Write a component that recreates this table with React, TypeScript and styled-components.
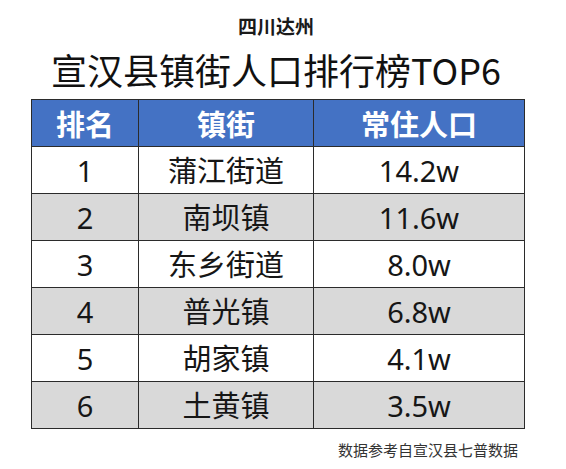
import React from "react";
import styled, { createGlobalStyle } from "styled-components";

const GlobalStyle = createGlobalStyle`
    body {
        margin: 0;
        background: #ffffff;
        font-family: "Noto Sans", "Noto Sans CJK SC", sans-serif;
    }
`;

const Page = styled.div`
    display: flex;
    flex-direction: column;
    width: 490px;
    padding: 16px 0 0 31px;
`;

const Region = styled.div`
    text-align: center;
    font-family: "Noto Sans CJK SC", sans-serif;
    font-weight: 700;
    font-size: 19px;
    line-height: 19px;
    color: #1a1a1a;
`;

const Title = styled.h1`
    margin: 13px 0 0 0;
    text-align: center;
    font-family: "Noto Sans CJK SC", sans-serif;
    font-weight: 400;
    font-size: 36px;
    line-height: 42px;
    color: #111111;
`;

const Table = styled.table`
    margin-top: 9px;
    width: 490px;
    border-collapse: collapse;
    table-layout: fixed;
`;

const HeadCell = styled.th<{ width: number }>`
    width: ${props => props.width}px;
    height: 46px;
    padding: 0;
    border: 1px solid #2b2b2b;
    background-color: #4472c4;

    font-family: "Noto Sans CJK SC", sans-serif;
    font-weight: 700;
    font-size: 29px;
    color: #ffffff;
    text-align: center;
`;

const Row = styled.tr<{ shaded: boolean }>`
    background-color: ${props => props.shaded ? "#d9d9d9" : "#ffffff"};
`;

const Cell = styled.td`
    height: 46px;
    padding: 0;
    border: 1px solid #2b2b2b;

    font-family: "Noto Sans", "Noto Sans CJK SC", sans-serif;
    font-weight: 400;
    font-size: 29px;
    line-height: 1;
    color: #161616;
    text-align: center;
`;

const Source = styled.div`
    margin-top: 13px;
    padding-right: 3px;
    text-align: right;
    font-family: "Noto Sans CJK SC", sans-serif;
    font-size: 15px;
    line-height: 16px;
    color: #333333;
`;

const rows = [
    { rank: 1, name: "蒲江街道", people: "14.2w" },
    { rank: 2, name: "南坝镇", people: "11.6w" },
    { rank: 3, name: "东乡街道", people: "8.0w" },
    { rank: 4, name: "普光镇", people: "6.8w" },
    { rank: 5, name: "胡家镇", people: "4.1w" },
    { rank: 6, name: "土黄镇", people: "3.5w" },
];

export default function App() {
    return (
        <>
            <GlobalStyle/>
            <Page>
                <Region>四川达州</Region>
                <Title>宣汉县镇街人口排行榜TOP6</Title>
                <Table>
                    <thead>
                        <tr>
                            <HeadCell width={106}>排名</HeadCell>
                            <HeadCell width={174}>镇街</HeadCell>
                            <HeadCell width={210}>常住人口</HeadCell>
                        </tr>
                    </thead>
                    <tbody>
                        { rows.map((row) =>
                            <Row shaded={row.rank % 2 === 0} key={row.rank}>
                                <Cell>{row.rank}</Cell>
                                <Cell>{row.name}</Cell>
                                <Cell>{row.people}</Cell>
                            </Row>
                        )}
                    </tbody>
                </Table>
                <Source>数据参考自宣汉县七普数据</Source>
            </Page>
        </>
    );
}
